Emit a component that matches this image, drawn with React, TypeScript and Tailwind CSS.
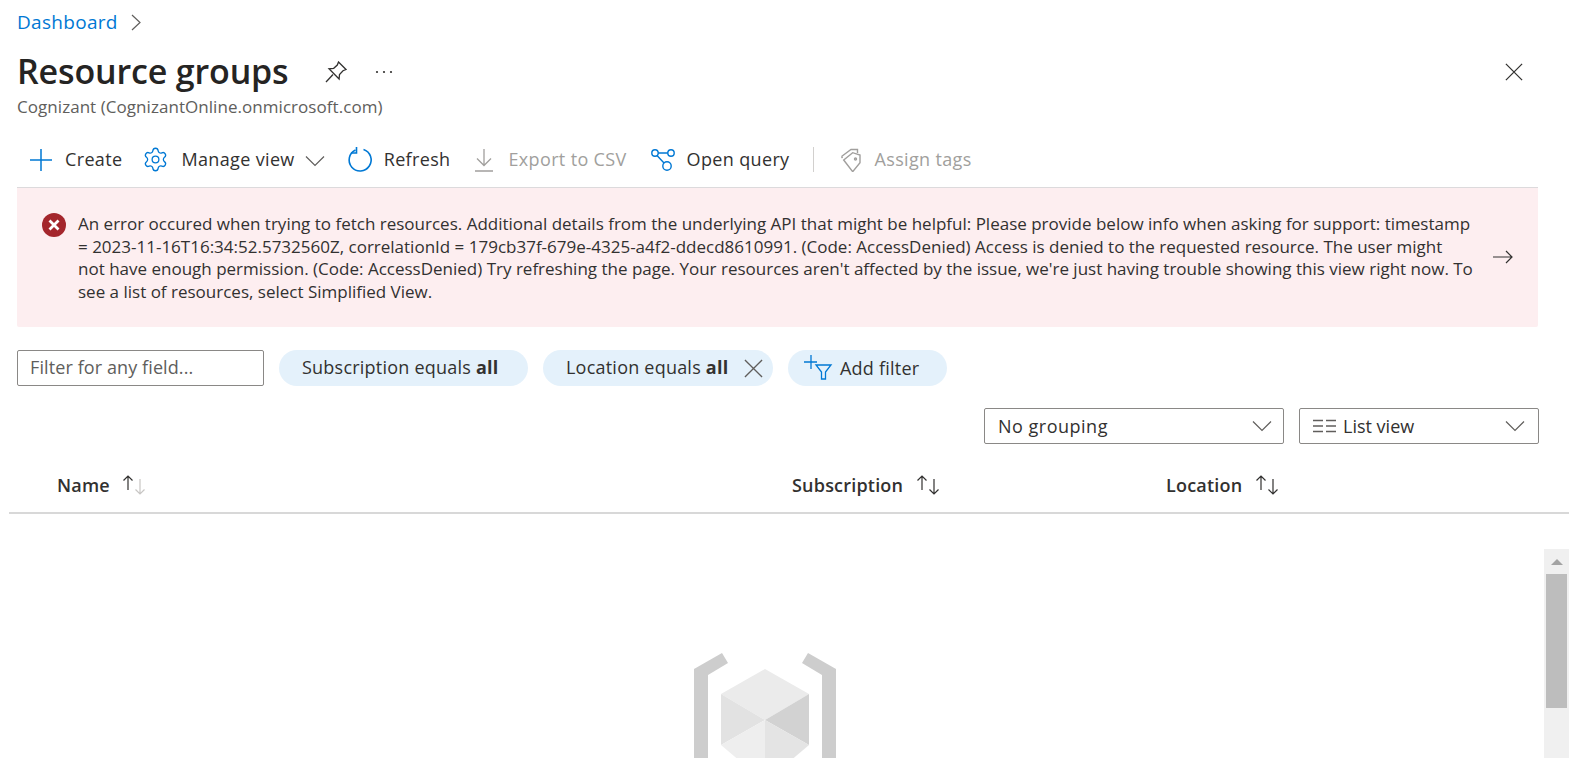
import React from 'react';
import { Settings } from 'lucide-react';

const font = "font-['Open_Sans','Noto_Sans',sans-serif]";

const SortArrows: React.FC<{ dimDown?: boolean }> = ({ dimDown }) => (
  <svg width="26" height="20" viewBox="0 0 26 20" fill="none" strokeWidth="1.2">
    <path d="M7 15V1M2.5 5.5L7 1l4.5 4.5" stroke="#323130" />
    <path d="M19 4v15M14.5 14.5L19 19l4.5-4.5" stroke={dimDown ? '#c8c6c4' : '#323130'} />
  </svg>
);

const Chevron: React.FC<{ className?: string }> = ({ className }) => (
  <svg className={className} width="20" height="12" viewBox="0 0 20 12" fill="none" stroke="#605e5c" strokeWidth="1.2">
    <path d="M1 1.5l9 9 9-9" />
  </svg>
);

const Cross: React.FC<{ size: number; color: string; className?: string }> = ({ size, color, className }) => (
  <svg className={className} width={size} height={size} viewBox="0 0 20 20" fill="none" stroke={color} strokeWidth="1.4">
    <path d="M1 1l18 18M19 1L1 19" />
  </svg>
);

const ToolbarButton: React.FC<{ icon: React.ReactNode; label: string; disabled?: boolean; className?: string }> = ({ icon, label, disabled, className }) => (
  <div className={`flex items-center shrink-0 ${className ?? ''}`}>
    {icon}
    <span className={`text-[18px] tracking-[0.35px] whitespace-nowrap ${disabled ? 'text-[#a19f9d]' : 'text-[#323130]'}`}>{label}</span>
  </div>
);

const App: React.FC = () => {
  return (
    <div className={`${font} w-[1569px] h-[758px] overflow-hidden bg-white text-[#323130] flex flex-col`}>
      {/* page header */}
      <div className="h-[44px] pl-[17px] flex items-center">
        <span className="text-[19px] tracking-[0.3px] text-[#0078d4]">Dashboard</span>
        <svg className="ml-[13px]" width="10" height="17" viewBox="0 0 10 17" fill="none" stroke="#605e5c" strokeWidth="1.2">
          <path d="M1 1l8 7.5L1 16" />
        </svg>
      </div>
      <div className="mt-[5px] h-[45px] pl-[17px] pr-[46px] flex items-center">
        <h1 className="text-[34px] font-semibold tracking-[-0.15px] text-[#252423] leading-none pb-[2px]">Resource groups</h1>
        <svg className="ml-[36px]" width="22" height="22" viewBox="0 0 22 22" fill="none" stroke="#323130" strokeWidth="1.3">
          <path d="M13.5 1L21 8.5l-3 1.2-3.5 3.8-.4 4.5L4 7.8l4.7-.5 3.6-3.3z" />
          <path d="M1 21l7-7.5" />
        </svg>
        <svg className="ml-[28px]" width="18" height="4" viewBox="0 0 18 4" fill="#323130">
          <circle cx="2" cy="2" r="1.1" />
          <circle cx="9" cy="2" r="1.1" />
          <circle cx="16" cy="2" r="1.1" />
        </svg>
        <Cross size={18} color="#323130" className="ml-auto" />
      </div>
      <div className="pl-[17px] h-[26px] flex items-center text-[17px] tracking-[0.05px] text-[#605e5c]">Cognizant (CognizantOnline.onmicrosoft.com)</div>

      {/* command bar */}
      <div className="mt-[17px] h-[50px] pb-[5px] flex items-center pl-[30px]">
        <ToolbarButton
          label="Create"
          icon={
            <svg className="mr-[13px]" width="22" height="22" viewBox="0 0 22 22" fill="none" stroke="#0078d4" strokeWidth="1.5">
              <path d="M0 11h22M11 0v22" />
            </svg>
          }
        />
        <ToolbarButton
          className="ml-[20px]"
          label="Manage view"
          icon={<Settings className="w-[27px] h-[27px] mr-[12px] text-[#0078d4]" strokeWidth={1.15} />}
        />
        <Chevron className="ml-[10px] mt-[2px]" />
        <ToolbarButton
          className="ml-[23px]"
          label="Refresh"
          icon={
            <svg className="mr-[12px] overflow-visible" width="24" height="24" viewBox="0 0 24 24" fill="none" stroke="#0078d4" strokeWidth="1.6">
              <path d="M15.5 1.5A11 11 0 1 1 7.5 2" />
              <path d="M8.5-1v6H3" strokeWidth="1.6" />
            </svg>
          }
        />
        <ToolbarButton
          className="ml-[24px]"
          disabled
          label="Export to CSV"
          icon={
            <svg className="mr-[14px]" width="20" height="24" viewBox="0 0 20 24" fill="none" stroke="#a19f9d" strokeWidth="1.3">
              <path d="M10 1v16M3 10.5l7 7 7-7M1 23h18" />
            </svg>
          }
        />
        <ToolbarButton
          className="ml-[23px]"
          label="Open query"
          icon={
            <svg className="mr-[12px]" width="25" height="24" viewBox="0 0 25 24" fill="none" stroke="#0078d4" strokeWidth="1.4">
              <circle cx="5" cy="5" r="3.2" />
              <circle cx="21" cy="5" r="3.2" />
              <circle cx="17" cy="18" r="4.2" />
              <path d="M8.2 5h9.6M7 7.5l7 7.5" />
            </svg>
          }
        />
        <div className="w-px h-[25px] ml-[24px] bg-[#d2d0ce]" />
        <ToolbarButton
          className="ml-[26px]"
          disabled
          label="Assign tags"
          icon={
            <svg className="mr-[10px]" width="24" height="24" viewBox="0 0 24 24" fill="none" stroke="#a19f9d" strokeWidth="1.4">
              <path d="M3.7 12l9-7.3L20 7v7.7l-7.3 9z" />
              <path d="M1.5 8.5L11 1.5h6.5v3.5M2.5 10l-1-1.5" />
              <circle cx="15.5" cy="11" r="1" />
            </svg>
          }
        />
      </div>

      {/* error banner */}
      <div className="ml-[17px] mr-[31px] h-[140px] border-t border-[#dcdadc] rounded-b-[2px] bg-[#fdeef0] flex">
        <svg className="mt-[25px] ml-[25px] shrink-0" width="24" height="24" viewBox="0 0 24 24">
          <circle cx="12" cy="12" r="12" fill="#a4262c" />
          <path d="M7.5 7.5l9 9M16.5 7.5l-9 9" stroke="#fff" strokeWidth="2.8" />
        </svg>
        <p className="ml-[12px] mt-[25px] w-[1410px] text-[17px] leading-[22.7px] whitespace-nowrap text-[#323130]">
          An error occured when trying to fetch resources. Additional details from the underlying API that might be helpful: Please provide below info when asking for support: timestamp
          <br />= 2023-11-16T16:34:52.5732560Z, correlationId = 179cb37f-679e-4325-a4f2-ddecd8610991. (Code: AccessDenied) Access is denied to the requested resource. The user might
          <br />not have enough permission. (Code: AccessDenied) Try refreshing the page. Your resources aren't affected by the issue, we're just having trouble showing this view right now. To
          <br />see a list of resources, select Simplified View.
        </p>
        <svg className="ml-auto mr-[25px] mt-[62px] shrink-0" width="20" height="14" viewBox="0 0 20 14" fill="none" stroke="#323130" strokeWidth="1.2">
          <path d="M0 7h19M13 1l6 6-6 6" />
        </svg>
      </div>

      {/* filters */}
      <div className="mt-[23px] pl-[17px] h-[36px] flex items-center text-[18px] tracking-[0.22px]">
        <div className="w-[247px] h-[36px] border border-[#8a8886] rounded-[2px] pl-[12px] pb-[2px] flex items-center tracking-[0.1px] text-[#605e5c]">Filter for any field...</div>
        <div className="ml-[15px] w-[249px] h-[36px] rounded-full bg-[#e4f1fb] pl-[23px] pb-[2px] flex items-center">
          <span>Subscription equals <b className="font-bold">all</b></span>
        </div>
        <div className="ml-[15px] w-[230px] h-[36px] rounded-full bg-[#e4f1fb] pl-[23px] flex items-center">
          <span className="pb-[2px]">Location equals <b className="font-bold">all</b></span>
          <Cross size={19} color="#605e5c" className="ml-[16px]" />
        </div>
        <div className="ml-[15px] w-[159px] h-[36px] rounded-full bg-[#e4f1fb] pl-[16px] flex items-center">
          <svg className="mr-[6px]" width="30" height="26" viewBox="0 0 30 26" fill="none" stroke="#0078d4" strokeWidth="1.3">
            <path d="M0 7h13M7 0v14" />
            <path d="M12 10h15l-5.5 7v7h-4v-7z" />
          </svg>
          <span>Add filter</span>
        </div>
      </div>

      {/* grouping and view selects */}
      <div className="mt-[22px] h-[36px] flex justify-end pr-[30px] gap-[15px] text-[18px]">
        <div className="w-[300px] border border-[#8a8886] rounded-[2px] pl-[13px] pr-[11px] flex items-center justify-between">
          <span className="tracking-[0.5px]">No grouping</span>
          <Chevron />
        </div>
        <div className="w-[240px] border border-[#8a8886] rounded-[2px] pl-[12px] pr-[13px] flex items-center">
          <svg className="mr-[6px]" width="25" height="14" viewBox="0 0 25 14" fill="none" stroke="#605e5c" strokeWidth="1.3">
            <path d="M1 1.5h10M1 7h10M1 12.5h10M14 1.5h10M14 7h10M14 12.5h10" />
          </svg>
          <span>List view</span>
          <Chevron className="ml-auto" />
        </div>
      </div>

      {/* column headers */}
      <div className="mt-[21px] ml-[9px] h-[49px] pb-[7px] border-b-2 border-[#d8d8d8] flex items-center text-[18px] font-semibold tracking-[0.2px]">
        <div className="w-[783px] pl-[48px] flex items-center gap-[11px]">Name <SortArrows dimDown /></div>
        <div className="w-[374px] flex items-center gap-[12px]">Subscription <SortArrows /></div>
        <div className="flex items-center gap-[12px]">Location <SortArrows /></div>
      </div>

      {/* empty state */}
      <div className="flex-1 min-h-0 flex">
        <div className="flex-1 pt-[139px] pl-[694px]">
          <svg width="142" height="120" viewBox="0 0 142 120">
            <path d="M0 16L28 0l6 10L14 22v98H0z" fill="#cdcdcd" />
            <path d="M142 16L114 0l-6 10 20 12v98h14z" fill="#cdcdcd" />
            <path d="M71 16l44 25-44 26-44-26z" fill="#ebebeb" />
            <path d="M27 41l44 26-44 25z" fill="#e2e2e2" />
            <path d="M115 41L71 67l44 25z" fill="#d2d2d2" />
            <path d="M27 92l44-25v53H60z" fill="#eeeeee" />
            <path d="M115 92L71 67v53h11z" fill="#e4e4e4" />
          </svg>
        </div>
        <div className="w-[25px] mt-[35px] bg-[#f0f0f0] flex flex-col items-center">
          <div className="h-[25px] flex items-center">
            <div className="w-0 h-0 border-l-[6px] border-r-[6px] border-b-[6px] border-l-transparent border-r-transparent border-b-[#a3a3a3]" />
          </div>
          <div className="w-[21px] h-[134px] bg-[#bdbdbd]" />
        </div>
      </div>
    </div>
  );
};

export default App;
